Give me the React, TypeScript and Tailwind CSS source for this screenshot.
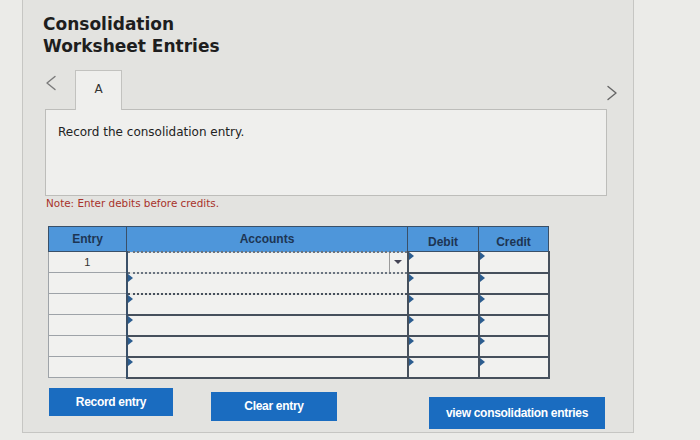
import React from 'react';

const Marker = () => (
  <span className="absolute left-0 top-0 w-0 h-0 border-t-[4px] border-b-[4px] border-l-[5px] border-t-transparent border-b-transparent border-l-[#2c5d8f]" />
);

const Chevron = ({ dir }: { dir: 'left' | 'right' }) => (
  <svg width="12" height="16" viewBox="0 0 12 16" fill="none" stroke="currentColor" strokeWidth="1.4" strokeLinecap="round" strokeLinejoin="round">
    <path d={dir === 'left' ? 'M10 1.5 L2 8 L10 14.5' : 'M2 1.5 L10 8 L2 14.5'} />
  </svg>
);

const rows = [0, 1, 2, 3, 4, 5];

export default function App() {
  return (
    <div className="w-[700px] h-[440px] bg-[#ebebe8] overflow-hidden font-['DejaVu_Sans',sans-serif]">
      <div className="ml-[22px] w-[612px] h-[433px] bg-[#e3e3e0] border-l border-r border-b border-[#c6c6c3] pl-[20px] pt-[13px]">
        <h1 className="text-[17px] leading-[22px] font-bold text-[#1e1e1e]">
          Consolidation
          <br />
          Worksheet Entries
        </h1>

        {/* tabs */}
        <div className="mt-[13px] w-[575px] flex items-end">
          <span className="mb-[18px] ml-[2px] text-[#7a7a7a]">
            <Chevron dir="left" />
          </span>
          <div className="ml-[18px] w-[47px] h-[40px] bg-[#efefed] border border-b-0 border-[#c2c2bf] flex justify-center pt-[9px] text-[12px] text-[#333] relative z-10 -mb-px">
            A
          </div>
          <div className="flex-1" />
          <span className="mb-[8px] text-[#666]">
            <Chevron dir="right" />
          </span>
        </div>
        <div className="ml-[2px] w-[562px] h-[87px] bg-[#efefed] border border-[#bdbdba] px-[12px] pt-[13px] text-[12px] text-[#222]">
          Record the consolidation entry.
        </div>

        <p className="ml-[3px] mt-[0px] text-[10.4px] leading-[14px] text-[#a8322a]">
          Note: Enter debits before credits.
        </p>

        {/* table */}
        <table className="ml-[5px] mt-[16px] border-collapse font-['Liberation_Sans',sans-serif] text-[12px]">
          <thead>
            <tr className="h-[22px] bg-[#4e96da] text-[#1d3553] font-bold">
              <th className="w-[78px] border border-[#3a5068] font-bold">Entry</th>
              <th className="w-[281px] border border-[#3a5068] border-b-[#4e96da] font-bold">Accounts</th>
              <th className="w-[71px] border border-[#3a5068] font-bold pt-[6px]">Debit</th>
              <th className="w-[70px] border border-[#3a5068] font-bold pt-[6px]">Credit</th>
            </tr>
          </thead>
          <tbody>
            {rows.map((r) => (
              <tr key={r} className="h-[21px]">
                <td className="border border-[#9ea3a8] border-r-[#3a5068] border-r-2 bg-[#f1f1ef] text-center text-[11px] text-[#333] align-top pt-[2px]">
                  {r === 0 ? '1' : ''}
                </td>
                <td className={`relative p-0 bg-[#f1f1ef] ${r === 0 ? 'border-2 border-dotted border-[#6a7480]' : 'border-b-2 border-[#46505c]'} ${r === 1 ? 'border-t-2 border-dotted border-t-[#6a7480]' : ''}`}>
                  {r === 0 ? (
                    <span className="absolute right-0 top-0 h-full w-[18px] border-l border-[#9a9a9a] flex items-center justify-center">
                      <span className="w-0 h-0 border-l-[4px] border-r-[4px] border-t-[4px] border-l-transparent border-r-transparent border-t-[#445]" />
                    </span>
                  ) : (
                    <Marker />
                  )}
                </td>
                <td className="relative p-0 bg-[#f1f1ef] border-2 border-[#46505c] border-t-0">
                  <Marker />
                </td>
                <td className="relative p-0 bg-[#f1f1ef] border-2 border-[#46505c] border-t-0">
                  <Marker />
                </td>
              </tr>
            ))}
          </tbody>
        </table>

        {/* buttons */}
        <div className="ml-[6px] mt-[9px] flex items-start font-['Liberation_Sans',sans-serif] text-[12px] font-bold text-white">
          <button className="w-[124px] h-[28px] bg-[#1a6cc0] tracking-[-0.3px]">Record entry</button>
          <button className="ml-[38px] mt-[4px] w-[126px] h-[29px] bg-[#1a6cc0] tracking-[-0.3px]">Clear entry</button>
          <button className="ml-[92px] mt-[9px] w-[176px] h-[32px] bg-[#1a6cc0] tracking-[-0.3px]">view consolidation entries</button>
        </div>
      </div>
    </div>
  );
}
